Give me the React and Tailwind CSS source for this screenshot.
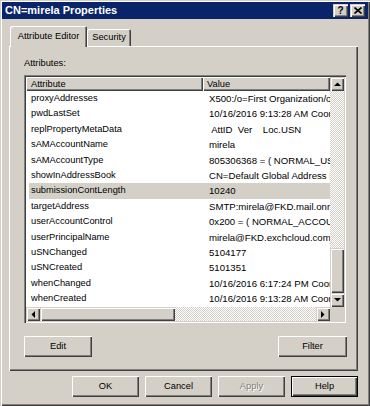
import React from "react";

const raised =
  "bg-[#d4d0c8] shadow-[inset_1px_1px_0_#ffffff,inset_-1px_-1px_0_#404040,inset_-2px_-2px_0_#808080]";
const scrollBtn =
  "bg-[#d4d0c8] shadow-[inset_1px_1px_0_#d4d0c8,inset_2px_2px_0_#ffffff,inset_-1px_-1px_0_#404040,inset_-2px_-2px_0_#808080]";
const checker =
  "bg-[repeating-conic-gradient(#ffffff_0%_25%,#d4d0c8_0%_50%)] bg-[length:2px_2px]";

const rows = [
  ["proxyAddresses", "X500:/o=First Organization/ou=Exchange Administrative Group"],
  ["pwdLastSet", "10/16/2016 9:13:28 AM Coordinated Universal Time"],
  ["replPropertyMetaData", " AttID  Ver    Loc.USN"],
  ["sAMAccountName", "mirela"],
  ["sAMAccountType", "805306368 = ( NORMAL_USER_ACCOUNT )"],
  ["showInAddressBook", "CN=Default Global Address List,CN=All Global Address Lists"],
  ["submissionContLength", "10240"],
  ["targetAddress", "SMTP:mirela@FKD.mail.onmicrosoft.com"],
  ["userAccountControl", "0x200 = ( NORMAL_ACCOUNT )"],
  ["userPrincipalName", "mirela@FKD.exchcloud.com"],
  ["uSNChanged", "5104177"],
  ["uSNCreated", "5101351"],
  ["whenChanged", "10/16/2016 6:17:24 PM Coordinated Universal Time"],
  ["whenCreated", "10/16/2016 9:13:28 AM Coordinated Universal Time"],
];

const Arrow = ({ dir }) => {
  const pts = {
    up: "0,4 7,4 3.5,0.5",
    down: "0,0 7,0 3.5,3.5",
    left: "4,0 4,7 0.5,3.5",
    right: "0,0 0,7 3.5,3.5",
  }[dir];
  const vertical = dir === "up" || dir === "down";
  return (
    <svg
      width={vertical ? 7 : 4}
      height={vertical ? 4 : 7}
      viewBox={vertical ? "0 0 7 4" : "0 0 4 7"}
    >
      <polygon points={pts} fill="#000" />
    </svg>
  );
};

const ScrollButton = ({ dir }) => (
  <div className={`${scrollBtn} w-[14px] h-[14px] flex items-center justify-center shrink-0`}>
    <Arrow dir={dir} />
  </div>
);

const Button = ({ children, className = "", disabled }) => (
  <div
    className={`${raised} h-[21px] flex items-center justify-center ${
      disabled ? "text-[#808080] [text-shadow:1px_1px_0_#ffffff]" : ""
    } ${className}`}
  >
    {children}
  </div>
);

export default function App() {
  return (
    <div className="w-[370px] h-[406px] bg-[#d4d0c8] p-[2px] flex flex-col overflow-hidden text-[9.3px] text-black font-['Liberation_Sans',Arial,sans-serif] shadow-[inset_1px_1px_0_#d4d0c8,inset_2px_2px_0_#ffffff,inset_-1px_-1px_0_#404040,inset_-2px_-2px_0_#808080]">
      {/* Title bar */}
      <div className="h-[17px] bg-[#0a246a] flex items-center justify-between pl-[3px] pr-[3px] shrink-0">
        <span className="text-white font-bold text-[11px] leading-none">CN=mirela Properties</span>
        <div className="flex gap-[2px]">
          <div className={`${scrollBtn} w-[15px] h-[13px] flex items-center justify-center font-bold text-[10px] leading-none`}>
            ?
          </div>
          <div className={`${scrollBtn} w-[15px] h-[13px] flex items-center justify-center`}>
            <svg width="8" height="7" viewBox="0 0 8 7">
              <path d="M0.5 0.5 L7.5 6.5 M7.5 0.5 L0.5 6.5" stroke="#000" strokeWidth="1.6" />
            </svg>
          </div>
        </div>
      </div>

      {/* Tabs + panel */}
      <div className="mt-[7px] ml-[7px] w-[349px]">
        <div className="flex items-end h-[20px] pl-[1px]">
          <div className="relative z-10 -mb-[1px] h-[21px] w-[77px] bg-[#d4d0c8] rounded-t-[2px] flex items-center justify-center shadow-[inset_1px_1px_0_#ffffff,inset_-1px_0_0_#404040,inset_-2px_0_0_#808080]">
            Attribute Editor
          </div>
          <div className="h-[17px] w-[44px] bg-[#d4d0c8] rounded-t-[2px] flex items-center justify-center shadow-[inset_1px_1px_0_#ffffff,inset_-1px_0_0_#404040,inset_-2px_0_0_#808080]">
            Security
          </div>
        </div>

        <div className={`${raised} h-[325px] pt-[12px] pl-[15px]`}>
          <div className="h-[11px] leading-[11px]">Attributes:</div>

          {/* List view */}
          <div className="mt-[6px] w-[322px] h-[248px] p-[2px] bg-white shadow-[inset_1px_1px_0_#808080,inset_2px_2px_0_#404040,inset_-1px_-1px_0_#ffffff,inset_-2px_-2px_0_#d4d0c8]">
            <div className="flex h-full">
              <div className="w-[304px] flex flex-col">
                <div className="flex h-[14px] shrink-0">
                  <div className={`${raised} w-[177px] pl-[5px] leading-[14px]`}>Attribute</div>
                  <div className={`${raised} w-[127px] pl-[4px] leading-[14px]`}>Value</div>
                </div>
                <div className="h-[216px] overflow-hidden">
                  {rows.map(([name, value], i) => (
                    <div
                      key={name}
                      className={`ml-[3px] flex h-[15.4px] leading-[15.4px] ${
                        i === 6 ? "bg-[#d4d0c8]" : ""
                      }`}
                    >
                      <div className="w-[174px] pl-[2px] shrink-0 whitespace-nowrap overflow-hidden">{name}</div>
                      <div className="w-[127px] pl-[6px] shrink-0 whitespace-pre overflow-hidden text-[9.6px]">{value}</div>
                    </div>
                  ))}
                </div>
                <div className="flex h-[14px] shrink-0">
                  <ScrollButton dir="left" />
                  <div className={`${scrollBtn} w-[135px] h-[14px]`} />
                  <div className={`${checker} w-[141px] h-[14px]`} />
                  <ScrollButton dir="right" />
                </div>
              </div>
              <div className="w-[14px] flex flex-col">
                <ScrollButton dir="up" />
                <div className={`${checker} h-[157px]`} />
                <div className={`${scrollBtn} h-[45px]`} />
                <ScrollButton dir="down" />
                <div className="h-[14px] bg-[#d4d0c8]" />
              </div>
            </div>
          </div>

          <div className="mt-[13px] w-[323px] flex justify-between">
            <Button className="w-[68px]">Edit</Button>
            <Button className="w-[69px]">Filter</Button>
          </div>
        </div>
      </div>

      {/* Dialog buttons */}
      <div className="mt-[5px] ml-[70px] flex gap-[6px]">
        <Button className="w-[67px]">OK</Button>
        <Button className="w-[67px]">Cancel</Button>
        <Button className="w-[67px]" disabled>
          Apply
        </Button>
        <div className="w-[67px] h-[21px] border border-black">
          <div className={`${raised} h-full flex items-center justify-center`}>Help</div>
        </div>
      </div>
    </div>
  );
}
